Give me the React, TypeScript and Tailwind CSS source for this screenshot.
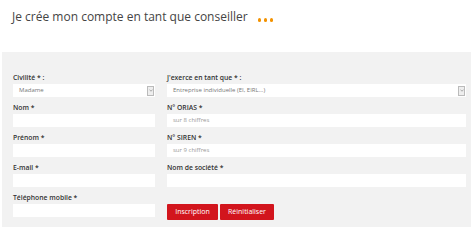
import React from "react";

const font = { fontFamily: '"Open Sans", "Liberation Sans", sans-serif' };

function Label({ children }: { children: React.ReactNode }) {
  return <p className="text-[6.8px] leading-[10px] font-semibold text-[#333] mb-[1px]">{children}</p>;
}

function TextInput({ placeholder }: { placeholder?: string }) {
  return (
    <div className="h-[13px] bg-white flex items-center px-[6px] text-[6px] text-[#999]">
      {placeholder}
    </div>
  );
}

function SelectBox({ value }: { value: string }) {
  return (
    <div className="h-[13px] bg-white flex items-center justify-between pl-[6px] pr-[1px] text-[6px] text-[#777]">
      <span>{value}</span>
      <div className="w-[7px] h-[10px] border border-[#bbb] bg-[#eee] flex items-center justify-center">
        <svg width="4" height="3" viewBox="0 0 4 3">
          <path d="M0.5 0.8 L2 2.2 L3.5 0.8" fill="none" stroke="#888" strokeWidth="0.7" />
        </svg>
      </div>
    </div>
  );
}

function Field({ label, children }: { label: string; children: React.ReactNode }) {
  return (
    <div className="mb-[6px]">
      <Label>{label}</Label>
      {children}
    </div>
  );
}

export default function App() {
  return (
    <div className="w-[474px] h-[231px] bg-white" style={font}>
      <div className="pl-[12px] pt-[8px] h-[52px] flex items-start gap-[10px]">
        <h1 className="text-[12px] leading-[18px] text-[#444]">Je crée mon compte en tant que conseiller</h1>
        <div className="flex gap-[2.5px] mt-[10px]">
          <span className="w-[3.5px] h-[3.5px] rounded-full bg-[#f39200]" />
          <span className="w-[3.5px] h-[3.5px] rounded-full bg-[#f39200]" />
          <span className="w-[3.5px] h-[3.5px] rounded-full bg-[#f39200]" />
        </div>
      </div>
      <div className="ml-[2px] w-[469px] h-[175px] bg-[#f2f2f2] pt-[21px] pl-[11px] pr-[5px]">
        <div className="grid grid-cols-[142px_299px] gap-x-[12px]">
          <Field label="Civilité * :">
            <SelectBox value="Madame" />
          </Field>
          <Field label="J'exerce en tant que * :">
            <SelectBox value="Entreprise individuelle (EI, EIRL...)" />
          </Field>
          <Field label="Nom *">
            <TextInput />
          </Field>
          <Field label="N° ORIAS *">
            <TextInput placeholder="sur 8 chiffres" />
          </Field>
          <Field label="Prénom *">
            <TextInput />
          </Field>
          <Field label="N° SIREN *">
            <TextInput placeholder="sur 9 chiffres" />
          </Field>
          <Field label="E-mail *">
            <TextInput />
          </Field>
          <Field label="Nom de société *">
            <TextInput />
          </Field>
          <Field label="Téléphone mobile *">
            <TextInput />
          </Field>
          <div className="pt-[11px] flex gap-[2px]">
            <button className="w-[51px] h-[16px] bg-[#d2151d] text-white text-[7px] rounded-[1px]">Inscription</button>
            <button className="w-[54px] h-[16px] bg-[#d2151d] text-white text-[7px] rounded-[1px]">Réinitialiser</button>
          </div>
        </div>
      </div>
    </div>
  );
}
